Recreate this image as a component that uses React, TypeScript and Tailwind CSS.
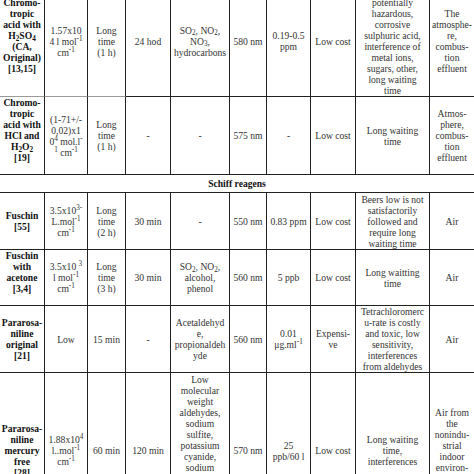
import type { ReactNode } from "react";

type Row = {
  h: string;
  cells: ReactNode[][];
  shiftName?: boolean;
  lightBottom?: boolean;
};

const cm = (
  <>
    cm<sup>-1</sup>
  </>
);

const rows: Row[] = [
  {
    h: "h-[109px]",
    shiftName: true,
    lightBottom: true,
    cells: [
      [
        "Chromo-",
        "tropic",
        "acid with",
        <>
          H<sub>2</sub>SO<sub>4</sub>
        </>,
        "(CA,",
        "Original)",
        "[13,15]",
      ],
      [
        "1.57x10",
        <>
          4 l mol<sup>-1</sup>
        </>,
        cm,
      ],
      ["Long", "time", "(1 h)"],
      ["24 hod"],
      [
        <>
          SO<sub>2</sub>, NO<sub>2</sub>,
        </>,
        <>
          NO<sub>3</sub>,
        </>,
        "hydrocarbons",
      ],
      ["580 nm"],
      ["0.19-0.5", "ppm"],
      ["Low cost"],
      [
        "Use of",
        "potentially",
        "hazardous,",
        "corrosive",
        "sulphuric acid,",
        "interference of",
        "metal ions,",
        "sugars, other,",
        "long waiting",
        "time",
      ],
      ["The", "atmosphe-", "re,", "combus-", "tion", "effluent"],
    ],
  },
  {
    h: "h-[77px]",
    shiftName: true,
    cells: [
      [
        "Chromo-",
        "tropic",
        "acid with",
        "HCl and",
        <>
          H<sub>2</sub>O<sub>2</sub>
        </>,
        "[19]",
      ],
      [
        "(1-71+/-",
        "0,02)x1",
        <>
          0<sup>4</sup> mol.l<sup>-</sup>
        </>,
        <>
          <sup>1</sup> cm<sup>-1</sup>
        </>,
      ],
      ["Long", "time", "(1 h)"],
      ["-"],
      ["-"],
      ["575 nm"],
      ["-"],
      ["Low cost"],
      ["Long waiting", "time"],
      ["Atmos-", "phere,", "combus-", "tion", "effluent"],
    ],
  },
];

const schiffRows: Row[] = [
  {
    h: "h-[57px]",
    cells: [
      ["Fuschin", "[55]"],
      [
        <>
          3.5x10<sup>3-</sup>
        </>,
        <>
          L.mol<sup>-1</sup>
        </>,
        cm,
      ],
      ["Long", "time", "(2 h)"],
      ["30 min"],
      ["-"],
      ["550 nm"],
      ["0.83 ppm"],
      ["Low cost"],
      [
        "Beers low is not",
        "satisfactorily",
        "followed and",
        "require long",
        "waiting time",
      ],
      ["Air"],
    ],
  },
  {
    h: "h-[55px]",
    shiftName: true,
    cells: [
      ["Fuschin", "with", "acetone", "[3,4]"],
      [
        <>
          3.5x10 <sup>3</sup>
        </>,
        <>
          l mol<sup>-1</sup>
        </>,
        cm,
      ],
      ["Long", "time", "(3 h)"],
      ["30 min"],
      [
        <>
          SO<sub>2</sub>, NO<sub>2</sub>,
        </>,
        "alcohol,",
        "phenol",
      ],
      ["560 nm"],
      ["5 ppb"],
      ["Low cost"],
      ["Long waitting", "time"],
      ["Air"],
    ],
  },
  {
    h: "h-[67px]",
    cells: [
      ["Pararosa-", "niline", "original", "[21]"],
      ["Low"],
      ["15 min"],
      ["-"],
      ["Acetaldehyd", "e,", "propionaldeh", "yde"],
      ["560 nm"],
      [
        "0.01",
        <>
          μg.ml<sup>-1</sup>
        </>,
      ],
      ["Expensi-", "ve"],
      [
        "Tetrachloromerc",
        "u-rate is costly",
        "and toxic, low",
        "sensitivity,",
        "interferences",
        "from aldehydes",
      ],
      ["Air"],
    ],
  },
  {
    h: "h-[156px]",
    cells: [
      ["Pararosa-", "niline", "mercury", "free", "[28]"],
      [
        <>
          1.88x10<sup>4</sup>
        </>,
        <>
          l..mol<sup>-1</sup>
        </>,
        cm,
      ],
      ["60 min"],
      ["120 min"],
      [
        "Low",
        "molecular",
        "weight",
        "aldehydes,",
        "sodium",
        "sulfite,",
        "potassium",
        "cyanide,",
        "sodium",
        "nitrite,",
        "hydrogen",
        "sulfide,",
        "sulfur",
        "dioxide",
      ],
      ["570 nm"],
      ["25", "ppb/60 l"],
      ["Low cost"],
      ["Long waiting", "time,", "interferences"],
      ["Air from", "the", "nonindu-", "strial", "indoor", "environ-", "ment", "s"],
    ],
  },
];

const widths = [45, 43, 38, 45, 59, 37, 44, 45, 74, 44];

function Lines({ lines }: { lines: ReactNode[] }) {
  return (
    <>
      {lines.map((l, i) => (
        <div key={i}>{l}</div>
      ))}
    </>
  );
}

function TableRow({ row }: { row: Row }) {
  return (
    <tr className={row.h}>
      {row.cells.map((cell, i) => {
        const last = i === row.cells.length - 1;
        const light = row.lightBottom && i < 3;
        return (
          <td
            key={i}
            className={`px-0 py-0 text-center align-middle whitespace-nowrap border-b-[1.5px] ${
              light ? "border-b-[#9a9a9a]" : "border-b-[#222]"
            } ${last ? "" : "border-r-[1.5px] border-r-[#222]"} ${
              i === 0
                ? `font-bold text-[#111] ${row.shiftName ? "pb-[11px]" : ""}`
                : "text-[#333]"
            }`}
          >
            <Lines lines={cell} />
          </td>
        );
      })}
    </tr>
  );
}

export default function App() {
  return (
    <div className="w-[474px] h-[474px] overflow-hidden bg-white">
      <table
        className="-mt-[14px] w-[474px] table-fixed border-separate border-spacing-0 text-[9.6px] leading-[11px]"
        style={{ fontFamily: '"Liberation Serif", "Times New Roman", serif' }}
      >
        <colgroup>
          {widths.map((w, i) => (
            <col key={i} style={{ width: w }} />
          ))}
        </colgroup>
        <tbody>
          {rows.map((r, i) => (
            <TableRow key={i} row={r} />
          ))}
          <tr className="h-[18px]">
            <td
              colSpan={10}
              className="text-center align-middle font-bold text-[9.6px] text-[#111] border-b-[1.5px] border-b-[#222]"
            >
              Schiff reagens
            </td>
          </tr>
          {schiffRows.map((r, i) => (
            <TableRow key={i} row={r} />
          ))}
        </tbody>
      </table>
    </div>
  );
}
